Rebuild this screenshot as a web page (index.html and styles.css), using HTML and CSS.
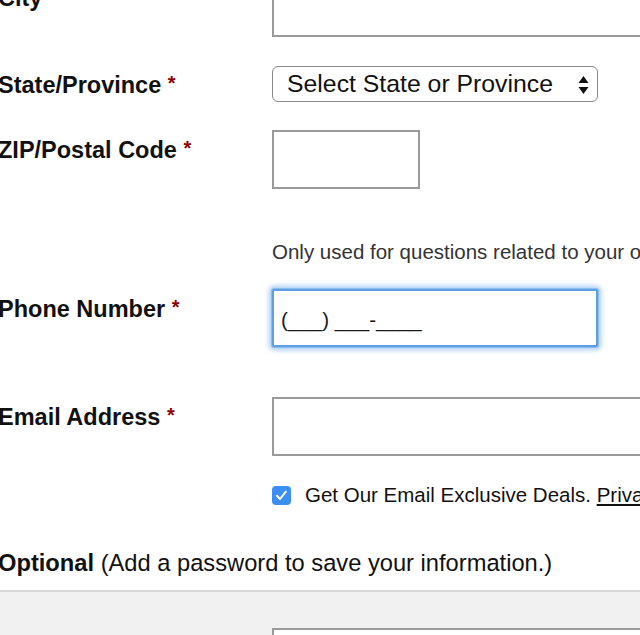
FILE: index.html
```html
<!DOCTYPE html>
<html>
<head>
<meta charset="utf-8">
<link rel="stylesheet" href="styles.css">
</head>
<body>
<form class="form">
  <div class="row row-city">
    <div class="label">City</div>
    <div class="field"><div class="input input-wide"></div></div>
  </div>
  <div class="row row-state">
    <div class="label">State/Province <span class="req">*</span></div>
    <div class="field">
      <div class="select">
        <span>Select State or Province</span>
        <svg class="arrows" width="11" height="20" viewBox="0 0 11 20"><path d="M5.5 1 L10.5 8 L0.5 8 Z M5.5 19 L10.5 12 L0.5 12 Z" fill="#111"/></svg>
      </div>
    </div>
  </div>
  <div class="row row-zip">
    <div class="label">ZIP/Postal Code <span class="req">*</span></div>
    <div class="field"><div class="input input-zip"></div></div>
  </div>
  <div class="row row-help">
    <div class="label"></div>
    <div class="field help">Only used for questions related to your order.</div>
  </div>
  <div class="row row-phone">
    <div class="label">Phone Number <span class="req">*</span></div>
    <div class="field"><div class="input input-phone">(___) ___-____</div></div>
  </div>
  <div class="row row-email">
    <div class="label">Email Address <span class="req">*</span></div>
    <div class="field"><div class="input input-wide"></div></div>
  </div>
  <div class="row row-check">
    <div class="label"></div>
    <div class="field check">
      <span class="box"><svg width="19" height="19" viewBox="0 0 19 19"><path d="M5 9.8 L8 13 L13.8 5.6" fill="none" stroke="#fff" stroke-width="2" stroke-linecap="round" stroke-linejoin="round"/></svg></span>
      <span>Get Our Email Exclusive Deals. <a class="link">Privacy Policy</a></span>
    </div>
  </div>
  <div class="optional"><b>Optional</b> (Add a password to save your information.)</div>
  <div class="section">
    <div class="row row-pass">
      <div class="label"></div>
      <div class="field"><div class="input input-wide"></div></div>
    </div>
  </div>
</form>
</body>
</html>
```
FILE: styles.css
```css
html, body {
  margin: 0;
  padding: 0;
  background: #fff;
  overflow: hidden;
}
.form {
  font-family: "Liberation Sans", Arial, sans-serif;
  color: #111;
  margin: -22px 0 0 -2px;
  width: 800px;
}
.row {
  display: flex;
}
.label {
  width: 274px;
  flex: none;
  font-size: 23.5px;
  font-weight: bold;
  padding-top: 7px;
  white-space: nowrap;
}
.req {
  color: #8b0000;
  font-size: 20px;
  vertical-align: 3px;
}
.field {
  flex: 1;
}
.input {
  box-sizing: border-box;
  height: 59px;
  border: 2px solid #9a9a9a;
  background: #fff;
}
.input-wide { width: 420px; }
.input-zip { width: 148px; }
.row-state { margin-top: 29px; }
.row-state .label { padding-top: 6px; }
.select {
  box-sizing: border-box;
  width: 326px;
  height: 36px;
  border: 1px solid #8a8a8a;
  border-radius: 6px;
  display: flex;
  align-items: center;
  justify-content: space-between;
  padding: 0 8px 0 14px;
  font-size: 24.8px;
  color: #111;
}
.arrows { margin-top: 1px; }
.row-zip { margin-top: 28px; }
.row-help { margin-top: 51px; }
.help {
  font-size: 20.5px;
  color: #333;
}
.row-phone { margin-top: 25px; }
.input-phone {
  width: 326px;
  height: 58px;
  border: 2px solid #5f9ee0;
  border-radius: 2px;
  box-shadow: 0 0 0 1px #8dbdf0, 0 0 5px 3px rgba(110, 170, 240, 0.6);
  font-size: 20.6px;
  color: #1a1a1a;
  padding: 17px 0 0 7px;
}
.row-email { margin-top: 50px; }
.row-check { margin-top: 27px; }
.check {
  display: flex;
  align-items: center;
  font-size: 20.5px;
  color: #111;
  white-space: nowrap;
}
.box {
  width: 19px;
  height: 19px;
  border-radius: 4px;
  background: #3b8ff4;
  margin-right: 14px;
  display: flex;
}
.link {
  color: #111;
  text-decoration: underline;
}
.optional {
  font-size: 23.7px;
  margin-top: 43px;
  height: 40px;
}
.section {
  background: #f1f1f1;
  border-top: 2px solid #d6d6d6;
  height: 200px;
  padding-top: 36px;
}
.row-pass .label { padding-top: 0; }
```
